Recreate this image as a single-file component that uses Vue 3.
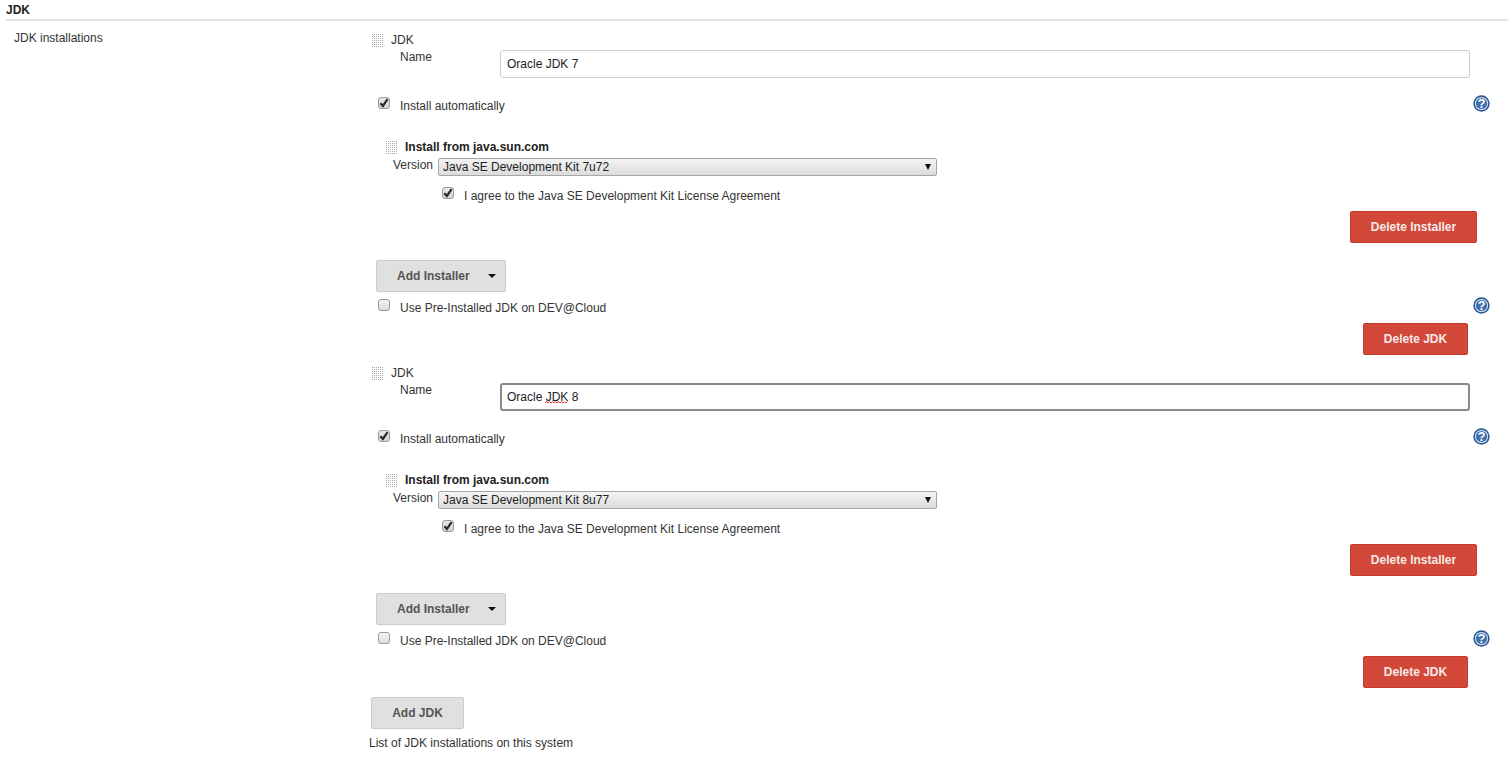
<script setup>
const jdks = [
  { name: 'Oracle JDK 7', version: 'Java SE Development Kit 7u72', focused: false },
  { name: 'Oracle JDK 8', version: 'Java SE Development Kit 8u77', focused: true },
]
</script>

<template>
  <div class="page">
    <div class="section-head">JDK</div>
    <div class="section-row">
      <div class="section-label">JDK installations</div>
      <div class="section-body">
        <div v-for="jdk in jdks" :key="jdk.name" class="jdk">
          <div class="title-row">
            <svg class="handle" width="12" height="13" viewBox="0 0 12 13">
              <defs>
                <pattern :id="'dots-' + jdk.name.slice(-1)" width="2" height="2" patternUnits="userSpaceOnUse">
                  <rect width="1" height="1" fill="#a8a8a8" />
                </pattern>
              </defs>
              <rect width="12" height="13" :fill="'url(#dots-' + jdk.name.slice(-1) + ')'" />
            </svg>
            <span>JDK</span>
          </div>
          <div class="name-row">
            <label class="name-label">Name</label>
            <div class="name-field">
              <input class="name-input" :class="{ focused: jdk.focused }" :value="jdk.name" spellcheck="false" />
              <svg v-if="jdk.focused" class="squiggle" width="23" height="3" viewBox="0 0 23 3">
                <path d="M0 2 L1.5 .7 L3 2 L4.5 .7 L6 2 L7.5 .7 L9 2 L10.5 .7 L12 2 L13.5 .7 L15 2 L16.5 .7 L18 2 L19.5 .7 L21 2 L22.5 .7" fill="none" stroke="#d9352b" stroke-width="1" />
              </svg>
            </div>
          </div>
          <div class="check-row auto-row">
            <span class="check">
              <svg width="10" height="10" viewBox="0 0 10 10"><path d="M1.4 5.2 L3.9 8 L8.6 1.2" fill="none" stroke="#2a2a2a" stroke-width="2.2" /></svg>
            </span>
            <span class="check-text">Install automatically</span>
            <svg class="help" width="17" height="17" viewBox="0 0 17 17">
              <circle cx="8.5" cy="8.5" r="8.2" fill="#2a5a98" />
              <circle cx="8.5" cy="8.5" r="6.6" fill="#dfe8f3" />
              <circle cx="8.5" cy="8.5" r="5.6" fill="#3f70ad" />
              <text x="8.5" y="13" text-anchor="middle" class="help-mark">?</text>
            </svg>
          </div>
          <div class="installer">
            <div class="installer-title">
              <svg class="handle" width="12" height="13" viewBox="0 0 12 13">
                <rect width="12" height="13" :fill="'url(#dots-' + jdk.name.slice(-1) + ')'" />
              </svg>
              <span>Install from java.sun.com</span>
            </div>
            <div class="version-row">
              <label class="version-label">Version</label>
              <div class="select-wrap">
                <select class="version-select">
                  <option>{{ jdk.version }}</option>
                </select>
                <span class="select-arrow"></span>
              </div>
            </div>
            <div class="check-row agree-row">
              <span class="check">
                <svg width="10" height="10" viewBox="0 0 10 10"><path d="M1.4 5.2 L3.9 8 L8.6 1.2" fill="none" stroke="#2a2a2a" stroke-width="2.2" /></svg>
              </span>
              <span class="check-text">I agree to the Java SE Development Kit License Agreement</span>
            </div>
            <div class="delete-installer-row">
              <button class="btn danger delete-installer">Delete Installer</button>
            </div>
          </div>
          <button class="btn add-installer">
            <span>Add Installer</span>
            <span class="caret"></span>
          </button>
          <div class="check-row cloud-row">
            <span class="check unchecked"></span>
            <span class="check-text">Use Pre-Installed JDK on DEV@Cloud</span>
            <svg class="help" width="17" height="17" viewBox="0 0 17 17">
              <circle cx="8.5" cy="8.5" r="8.2" fill="#2a5a98" />
              <circle cx="8.5" cy="8.5" r="6.6" fill="#dfe8f3" />
              <circle cx="8.5" cy="8.5" r="5.6" fill="#3f70ad" />
              <text x="8.5" y="13" text-anchor="middle" class="help-mark">?</text>
            </svg>
          </div>
          <div class="delete-jdk-row">
            <button class="btn danger delete-jdk">Delete JDK</button>
          </div>
        </div>
        <button class="btn add-jdk">Add JDK</button>
        <div class="footnote">List of JDK installations on this system</div>
      </div>
    </div>
  </div>
</template>

<style>
html, body { background: #fff; }
</style>

<style scoped>
.page {
  font-family: "Liberation Sans", Arial, sans-serif;
  font-size: 12px;
  line-height: 14px;
  color: #333;
  background: #fff;
  height: 757px;
  overflow: hidden;
}
.section-head {
  margin-left: 6px;
  height: 19px;
  padding-top: 3px;
  box-sizing: border-box;
  font-weight: 700;
  color: #222;
}
.section-row {
  display: grid;
  grid-template-columns: 363px 1fr;
  border-top: 2px solid #e4e4e4;
  margin-left: 6px;
}
.section-label {
  padding: 10px 0 0 8px;
}
.jdk {
  height: 333px;
  box-sizing: border-box;
  padding-top: 12px;
}
.title-row {
  display: flex;
  align-items: center;
  gap: 7px;
  height: 14px;
  padding-left: 3px;
}
.name-row {
  display: flex;
  margin-top: 3px;
  padding-left: 31px;
}
.name-label {
  width: 100px;
}
.name-field {
  position: relative;
  display: flex;
}
.name-input {
  width: 970px;
  height: 28px;
  box-sizing: border-box;
  border: 1px solid #ccc;
  border-radius: 3px;
  padding: 0 6px;
  font: inherit;
  color: #222;
  outline: none;
  background: #fff;
}
.name-input.focused {
  border: 2px solid #8a8a8a;
  padding: 0 5px;
}
.squiggle {
  position: absolute;
  left: 45px;
  top: 18px;
}
.check-row {
  display: flex;
  align-items: flex-start;
  position: relative;
}
.check {
  width: 12px;
  height: 12px;
  box-sizing: border-box;
  border: 1px solid #9c9c9c;
  border-radius: 3px;
  background: linear-gradient(#e8e8e8, #d2d2d2);
  display: flex;
  align-items: center;
  justify-content: center;
  flex: none;
}
.check.unchecked { background: linear-gradient(#f4f4f4, #dcdcdc); }
.check-text { margin-left: 10px; padding-top: 2px; }
.auto-row {
  margin-top: 19px;
  padding-left: 9px;
}
.help {
  position: absolute;
  left: 1104px;
  top: -2px;
}
.help-mark {
  font-family: "Liberation Sans", Arial, sans-serif;
  font-size: 12.5px;
  font-weight: 700;
  fill: #fff;
}
.installer { margin-top: 27px; }
.installer-title {
  display: flex;
  align-items: center;
  gap: 7px;
  height: 14px;
  padding-left: 17px;
  font-weight: 700;
  color: #222;
}
.version-row {
  display: flex;
  margin-top: 4px;
  padding-left: 24px;
  align-items: flex-start;
}
.version-label { width: 45px; }
.select-wrap {
  position: relative;
  width: 499px;
  height: 18px;
}
.version-select {
  appearance: none;
  width: 100%;
  height: 100%;
  box-sizing: border-box;
  border: 1px solid #a6a6a6;
  border-radius: 2px;
  background: linear-gradient(#f4f4f4, #dcdcdc);
  padding: 0 4px;
  font: inherit;
  color: #222;
  outline: none;
}
.select-arrow {
  position: absolute;
  right: 6px;
  top: 6px;
  width: 0;
  height: 0;
  border-left: 3.5px solid transparent;
  border-right: 3.5px solid transparent;
  border-top: 6px solid #111;
}
.agree-row {
  margin-top: 11px;
  padding-left: 73px;
}
.delete-installer-row {
  display: flex;
  justify-content: flex-end;
  margin-top: 8px;
  margin-right: 31px;
}
.btn {
  font: inherit;
  font-weight: 700;
  box-sizing: border-box;
  border: 1px solid #cbcbcb;
  border-radius: 2px;
  background: #e0e0e0;
  color: #555;
  padding: 0;
}
.danger {
  background: #d24939;
  border-color: #c33a2c;
  color: #f5e8e8;
}
.delete-installer { width: 127px; height: 32px; }
.add-installer {
  display: flex;
  align-items: center;
  width: 130px;
  height: 32px;
  margin: 17px 0 0 7px;
  padding-left: 20px;
}
.caret {
  width: 0;
  height: 0;
  margin-left: 18px;
  border-left: 4px solid transparent;
  border-right: 4px solid transparent;
  border-top: 4px solid #111;
}
.cloud-row {
  margin-top: 7px;
  padding-left: 9px;
}
.delete-jdk-row {
  display: flex;
  justify-content: flex-end;
  margin-top: 8px;
  margin-right: 40px;
}
.delete-jdk { width: 105px; height: 32px; }
.add-jdk {
  display: block;
  width: 93px;
  height: 32px;
  margin: 10px 0 0 2px;
}
.footnote {
  margin-top: 7px;
}
</style>
